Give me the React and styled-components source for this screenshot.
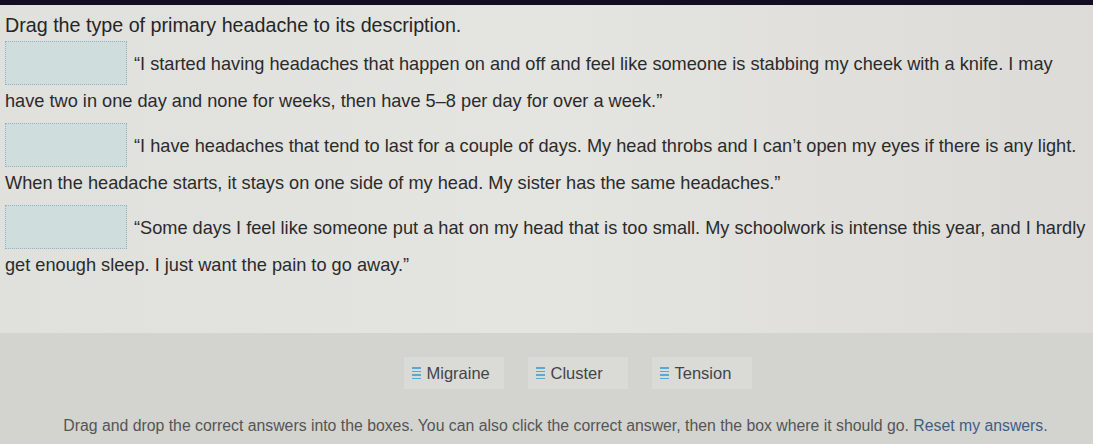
import React from "react";
import styled, { createGlobalStyle } from "styled-components";

const Global = createGlobalStyle`
  html, body { margin: 0; padding: 0; }
  body {
    background: #e1e1de;
    font-family: "Liberation Sans", Arial, sans-serif;
    color: #2b2b2b;
    width: 1093px;
    height: 444px;
    overflow: hidden;
  }
`;

const Page = styled.div`
  display: flex;
  flex-direction: column;
  height: 444px;
  background: linear-gradient(90deg, #e0e0dd 0%, #e4e4e1 50%, #dcdbd7 100%);
`;

const TopBar = styled.div`
  height: 5px;
  background: #130d22;
  flex: none;
`;

const Title = styled.h1`
  margin: 0;
  padding: 7px 0 0 5px;
  font-size: 19.7px;
  font-weight: normal;
  line-height: 26px;
  color: #262626;
`;

const Questions = styled.div`
  display: flex;
  flex-direction: column;
  gap: 10px;
  padding: 5px 3px 0 5px;
`;

const Question = styled.p`
  margin: 0;
  font-size: 18.2px;
  line-height: 28px;
  color: #2b2b2b;
`;

const DropBox = styled.span`
  display: inline-block;
  width: 122px;
  height: 44px;
  box-sizing: border-box;
  vertical-align: middle;
  background: #cfdedd;
  border: 1px dotted #8fb3c9;
  margin-right: 7px;
  position: relative;
  top: -2px;
`;

const Bank = styled.div`
  margin-top: auto;
  height: 111px;
  background: #d3d3d0;
  display: flex;
  flex-direction: column;
  align-items: center;
`;

const Tiles = styled.div`
  display: flex;
  gap: 24px;
  margin-top: 24px;
  margin-left: 62px;
`;

const Tile = styled.div`
  display: flex;
  align-items: center;
  gap: 6px;
  width: 100px;
  height: 32px;
  box-sizing: border-box;
  padding-left: 8px;
  background: #dadad7;
  font-size: 16.5px;
  color: #454545;
`;

const Grip = styled.span`
  display: flex;
  flex-direction: column;
  gap: 2px;
  width: 9px;
  span {
    display: block;
    height: 1.5px;
    background: #5aa9d3;
  }
`;

const Footer = styled.p`
  margin: 28px 0 0 18px;
  font-size: 15.8px;
  color: #555;
  line-height: 18px;
`;

const Link = styled.a`
  color: #3c5f86;
  text-decoration: none;
`;

const questions = [
  "\u201CI started having headaches that happen on and off and feel like someone is stabbing my cheek with a knife. I may have two in one day and none for weeks, then have 5\u20138 per day for over a week.\u201D",
  "\u201CI have headaches that tend to last for a couple of days. My head throbs and I can\u2019t open my eyes if there is any light. When the headache starts, it stays on one side of my head. My sister has the same headaches.\u201D",
  "\u201CSome days I feel like someone put a hat on my head that is too small. My schoolwork is intense this year, and I hardly get enough sleep. I just want the pain to go away.\u201D",
];

const answers = ["Migraine", "Cluster", "Tension"];

export default function App() {
  return (
    <>
      <Global />
      <Page>
        <TopBar />
        <Title>Drag the type of primary headache to its description.</Title>
        <Questions>
          {questions.map((q, i) => (
            <Question key={i}>
              <DropBox />
              {q}
            </Question>
          ))}
        </Questions>
        <Bank>
          <Tiles>
            {answers.map((a) => (
              <Tile key={a}>
                <Grip>
                  <span />
                  <span />
                  <span />
                  <span />
                </Grip>
                {a}
              </Tile>
            ))}
          </Tiles>
          <Footer>
            Drag and drop the correct answers into the boxes. You can also click the correct answer, then the box where it should go.{" "}
            <Link href="#">Reset my answers.</Link>
          </Footer>
        </Bank>
      </Page>
    </>
  );
}
